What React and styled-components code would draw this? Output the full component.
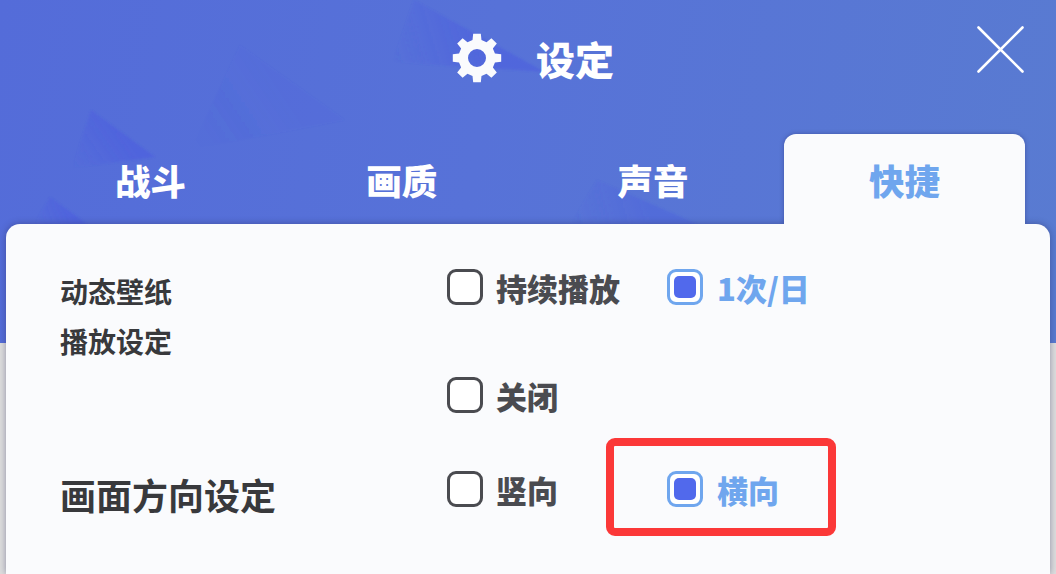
import React from "react";
import styled, { createGlobalStyle } from "styled-components";

const CJK = `"Noto Sans CJK SC", "Noto Sans", sans-serif`;
const BLUE = "#6fa6ee";
const PANEL = "#fafbfd";

const GlobalStyle = createGlobalStyle`
  html, body {
    margin: 0;
    padding: 0;
    width: 1056px;
    height: 574px;
    overflow: hidden;
  }
`;

const Page = styled.div`
  position: relative;
  isolation: isolate;
  width: 1056px;
  height: 574px;
  overflow: hidden;
  font-family: ${CJK};
  display: flex;
  flex-direction: column;
  background:
    linear-gradient(100deg, #546cd9 0%, #5772d8 45%, #597bd1 100%) 0 0 / 100% 343px no-repeat,
    #dedede;
`;

const Artwork = styled.svg`
  position: absolute;
  z-index: -1;
  top: 0;
  left: 0;
`;

const TitleBar = styled.header`
  position: relative;
  height: 134px;
  flex: none;
  padding: 33px 0 0 10px;
  box-sizing: border-box;
  display: flex;
  justify-content: center;
  align-items: flex-start;
  gap: 34px;
`;

const TitleText = styled.h1`
  margin: 0;
  height: 50px;
  line-height: 50px;
  font-size: 39px;
  font-weight: 900;
  color: #fff;
`;

const CloseButton = styled.button`
  position: absolute;
  top: 26px;
  left: 977px;
  width: 47px;
  height: 47px;
  padding: 0;
  border: 0;
  background: none;
`;

const Tabs = styled.nav`
  flex: none;
  height: 90px;
  margin-left: 30px;
  display: grid;
  grid-template-columns: repeat(4, 241px);
  column-gap: 10.3px;
`;

const Tab = styled.div`
  position: relative;
  z-index: ${(p) => (p.$active ? 1 : 0)};
  display: flex;
  align-items: flex-start;
  justify-content: center;
  padding-top: 20px;
  box-sizing: border-box;
  font-size: 35.5px;
  line-height: 52px;
  font-weight: 900;
  color: ${(p) => (p.$active ? BLUE : "#fff")};
  background: ${(p) => (p.$active ? PANEL : "transparent")};
  border-radius: 12px 12px 0 0;
  box-shadow: ${(p) => (p.$active ? "0 0 4px rgba(40, 50, 120, 0.5)" : "none")};
  clip-path: inset(-6px -6px 0 -6px);
`;

const Panel = styled.main`
  position: relative;
  flex: 1;
  margin: 0 6px;
  padding: 45px 54px 0;
  background: ${PANEL};
  border-radius: 14px 14px 0 0;
  box-shadow: 0 0 7px rgba(40, 45, 90, 0.45);
  display: grid;
  grid-template-columns: 387px 220px 1fr;
  grid-template-rows: 108px 94px auto;
`;

const SmallLabel = styled.div`
  grid-row: 1 / span 2;
  margin-top: -3px;
  font-size: 28px;
  line-height: 50px;
  font-weight: 700;
  color: #38393c;
`;

const LargeLabel = styled.div`
  grid-column: 1;
  grid-row: 3;
  margin-top: 5px;
  height: 36px;
  font-size: 36px;
  line-height: 36px;
  font-weight: 700;
  color: #38393c;
`;

const Option = styled.label`
  position: relative;
  display: flex;
  align-items: flex-start;
  gap: ${(p) => (p.$checked ? "14px" : "13px")};
  height: 36px;
  font-size: 31px;
  line-height: 38px;
  font-weight: 900;
  color: ${(p) => (p.$checked ? BLUE : "#4a4b50")};
`;

const Box = styled.span`
  flex: none;
  box-sizing: border-box;
  width: 36px;
  height: 36px;
  border-radius: 9px;
  border: 3px solid ${(p) => (p.$checked ? BLUE : "#4a4b50")};
  background: #fff;
  padding: 4px;
  display: flex;
`;

const Fill = styled.span`
  flex: 1;
  border-radius: 5px;
  background: #5169ec;
`;

const Highlight = styled.span`
  position: absolute;
  left: -61px;
  top: -33px;
  width: 230px;
  height: 98px;
  box-sizing: border-box;
  border: 8px solid #fb3838;
  border-radius: 9px;
`;

// faint diagonal streaks of the header art: [ax, ay, bx, by, cx, cy, alpha]
const streaks = [
  [91, 110, 155, 157, 72, 168, 0.34],
  [50, 197, 87, 224, 34, 224, 0.34],
  [414, 0, 545, 72, 392, 62, 0.34],
  [597, 180, 697, 224, 570, 224, 0.24],
  [240, 45, 345, 120, 190, 150, 0.07],
];

const HeaderArt = () => (
  <Artwork width="1056" height="343" aria-hidden="true">
    <defs>
      <filter id="soft">
        <feGaussianBlur stdDeviation="1.2" />
      </filter>
      {streaks.map(([ax, ay, bx, by, cx, cy, alpha], i) => (
        <linearGradient
          key={i}
          id={`streak${i}`}
          gradientUnits="userSpaceOnUse"
          x1={(ax + bx) / 2}
          y1={(ay + by) / 2}
          x2={cx}
          y2={cy}
        >
          <stop offset="0" stopColor="#4450e4" stopOpacity={alpha} />
          <stop offset="1" stopColor="#4450e4" stopOpacity="0" />
        </linearGradient>
      ))}
    </defs>
    <g filter="url(#soft)">
      {streaks.map(([ax, ay, bx, by, cx, cy], i) => (
        <polygon key={i} points={`${ax},${ay} ${bx},${by} ${cx},${cy}`} fill={`url(#streak${i})`} />
      ))}
    </g>
  </Artwork>
);

const gearPath = () => {
  const pt = (r, deg) => {
    const a = ((deg - 90) * Math.PI) / 180;
    return `${(25 + r * Math.cos(a)).toFixed(2)} ${(25 + r * Math.sin(a)).toFixed(2)}`;
  };
  let d = "";
  for (let i = 0; i < 8; i++) {
    const c = i * 45;
    d += `${i ? "L" : "M"}${pt(18.5, c - 14)}L${pt(24.5, c - 9)}L${pt(24.5, c + 9)}L${pt(18.5, c + 14)}`;
  }
  return `${d}Z M25 16a9 9 0 1 0 0 18a9 9 0 1 0 0-18Z`;
};

const Gear = () => (
  <svg width="50" height="50" viewBox="0 0 50 50" aria-hidden="true">
    <path fillRule="evenodd" fill="#fafbfd" d={gearPath()} />
  </svg>
);

const CloseIcon = () => (
  <svg width="47" height="47" viewBox="0 0 47 47" aria-hidden="true">
    <path d="M1.5 1.5l44 44M45.5 1.5l-44 44" stroke="#fff" strokeWidth="2.6" strokeLinecap="round" />
  </svg>
);

function Check({ checked, highlight, children }) {
  return (
    <Option $checked={checked}>
      {highlight && <Highlight />}
      <Box $checked={checked}>{checked && <Fill />}</Box>
      <span>{children}</span>
    </Option>
  );
}

export default function App() {
  return (
    <Page>
      <GlobalStyle />
      <HeaderArt />
      <TitleBar>
        <Gear />
        <TitleText>设定</TitleText>
        <CloseButton>
          <CloseIcon />
        </CloseButton>
      </TitleBar>
      <Tabs>
        <Tab>战斗</Tab>
        <Tab>画质</Tab>
        <Tab>声音</Tab>
        <Tab $active>快捷</Tab>
      </Tabs>
      <Panel>
        <SmallLabel>
          动态壁纸
          <br />
          播放设定
        </SmallLabel>
        <Check>持续播放</Check>
        <Check checked>1次/日</Check>
        <Check>关闭</Check>
        <span />
        <LargeLabel>画面方向设定</LargeLabel>
        <Check>竖向</Check>
        <Check checked highlight>
          横向
        </Check>
      </Panel>
    </Page>
  );
}
